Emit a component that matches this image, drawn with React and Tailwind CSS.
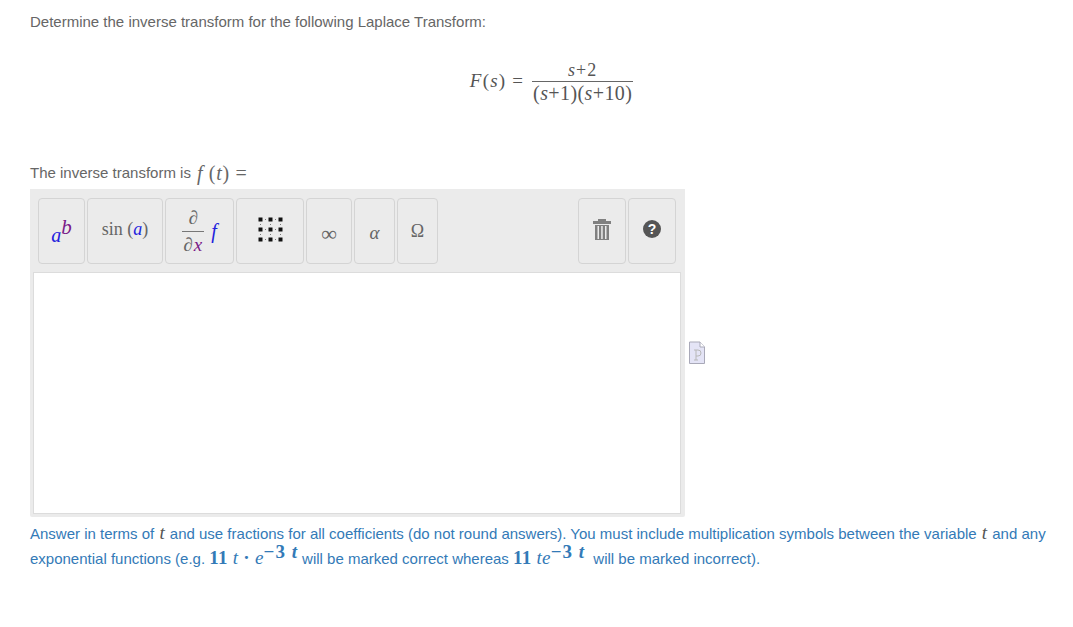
const mathFont = "font-['Liberation_Serif',serif]";

function ToolButton({ className, children }) {
  return (
    <button className={`flex h-[66px] shrink-0 items-center justify-center rounded-[4px] border border-[#d4d4d4] bg-[#ebebeb] ${className}`}>
      {children}
    </button>
  );
}

function MatrixIcon() {
  const spots = [0, 1, 2];
  return (
    <svg width="25" height="25" viewBox="0 0 25 25" className="mb-1">
      {spots.map((r) => spots.map((c) => (
        <rect key={`${r}-${c}`} x={c * 10 + 0.5} y={r * 10 + 0.5} width="4" height="4" fill="#111" />
      )))}
      {spots.map((r) => [0, 1].map((c) => (
        <rect key={`h${r}-${c}`} x={7 + c * 10} y={2 + r * 10} width="1" height="1" fill="#777" />
      )))}
      {[0, 1].map((r) => spots.map((c) => (
        <rect key={`v${r}-${c}`} x={2 + c * 10} y={7 + r * 10} width="1" height="1" fill="#777" />
      )))}
    </svg>
  );
}

function TrashIcon() {
  return (
    <svg width="18" height="21" viewBox="0 0 18 21" className="mb-1">
      <rect x="5" y="0" width="8" height="2" fill="#808080" />
      <rect x="0" y="2" width="18" height="3" fill="#808080" />
      <path d="M2 6h14V21H2z" fill="#808080" />
      <rect x="4.500" y="7" width="1.500" height="13" fill="#ebebeb" />
      <rect x="8.200" y="7" width="1.500" height="13" fill="#ebebeb" />
      <rect x="12" y="7" width="1.500" height="13" fill="#ebebeb" />
    </svg>
  );
}

function DocIcon() {
  return (
    <svg width="16" height="23" viewBox="0 0 16 23">
      <path d="M0.500 1h10.500l4.500 5v16.500H0.500z" fill="#e4e4f6" stroke="#a9a9b8" />
      <path d="M11 1v5h4.500" fill="#fff" stroke="#a9a9b8" />
      <path d="M5 9h4a2.500 2.500 0 0 1 0 6H7M7 9v10M5 19h4" fill="none" stroke="#b8b8b8" />
    </svg>
  );
}

function Toolbar() {
  return (
    <div className="flex h-[83px] items-start bg-[#ebebeb] pl-2 pr-[9px] pt-[9px]">
      <div className="flex gap-[2px]">
        <ToolButton className="w-[47px]">
          <span className={`${mathFont} pt-2 text-[20px] italic leading-none text-[#2222dd]`}>
            a<sup className="relative -top-[8px] align-baseline text-[21px] text-[#7a1a88]">b</sup>
          </span>
        </ToolButton>
        <ToolButton className="w-[76px]">
          <span className={`${mathFont} pb-1 text-[18px] text-[#666]`}>
            sin (<span className="italic text-[#2222dd]">a</span>)
          </span>
        </ToolButton>
        <ToolButton className="w-[69px]">
          <span className={`${mathFont} flex items-center gap-[7px] text-[#666]`}>
            <span className="flex flex-col items-center text-[19px] italic leading-[20px]">
              <span className="w-[22px] border-b border-[#777] pb-[3px] text-center">∂</span>
              <span className="pt-[3px] tracking-[1px]">∂<span className="text-[#7a1a88]">x</span></span>
            </span>
            <span className="text-[20px] italic text-[#2222dd]">f</span>
          </span>
        </ToolButton>
        <ToolButton className="w-[68px]">
          <MatrixIcon />
        </ToolButton>
        <ToolButton className="w-[46px]">
          <span className={`${mathFont} pt-1 text-[22px] text-[#666]`}>∞</span>
        </ToolButton>
        <ToolButton className="w-[41px]">
          <span className={`${mathFont} pt-1 text-[19px] italic text-[#666]`}>α</span>
        </ToolButton>
        <ToolButton className="w-[41px]">
          <span className={`${mathFont} text-[18px] text-[#666]`}>Ω</span>
        </ToolButton>
      </div>
      <div className="ml-auto flex gap-[2px]">
        <ToolButton className="w-[48px]">
          <TrashIcon />
        </ToolButton>
        <ToolButton className="w-[48px]">
          <span className="mb-1 flex h-[18px] w-[18px] items-center justify-center rounded-full bg-[#555] font-['Liberation_Sans',sans-serif] text-[14px] font-bold text-white">?</span>
        </ToolButton>
      </div>
    </div>
  );
}

function Exp() {
  return (
    <sup className={`${mathFont} relative -top-[6px] align-baseline text-[19px] font-bold tracking-[1px]`}>
      −3 <span className="italic">t</span>
    </sup>
  );
}

export default function App() {
  return (
    <div className="h-[627px] bg-white pl-[30px] pt-[14px] font-['Liberation_Sans',sans-serif] text-[15px] text-[#666]">
      <p className="h-[16px] leading-[16px]">Determine the inverse transform for the following Laplace Transform:</p>

      <div className={`${mathFont} mt-[30px] flex h-[44px] items-center justify-center text-[#555]`}>
        <span className="mr-[8px] pb-[2px] text-[19px] tracking-[1.2px]"><i>F</i>(<i>s</i>) =</span>
        <span className="flex flex-col items-center">
          <span className="w-[101px] border-b border-[#666] pb-[1px] text-center text-[18px] leading-[20px] tracking-[1px]"><i>s</i>+2</span>
          <span className="text-[20px] leading-[23px] tracking-[0.4px]">(<i>s</i>+1)(<i>s</i>+10)</span>
        </span>
      </div>

      <p className="mt-[59px] flex h-[20px] items-center">
        The inverse transform is
        <span className={`${mathFont} ml-[6px] text-[20px] tracking-[0.7px]`}><i>f</i> (<i>t</i>) =</span>
      </p>

      <div className="mt-[6px] flex items-center">
        <div className="h-[328px] w-[655px] rounded-[2px] bg-[#ebebeb]">
          <Toolbar />
          <div className="ml-[3px] h-[242px] w-[648px] border border-[#dcdcdc] bg-white" />
        </div>
        <div className="mb-[2px] ml-1">
          <DocIcon />
        </div>
      </div>

      <div className="mt-[4px] text-[#337ab7]">
        <p className="h-[25px] whitespace-nowrap leading-[24px]">
          Answer in terms of <i className={`${mathFont} px-[1px] text-[19px] text-[#555]`}>t</i> and use fractions for all coefficients (do not round answers). You must include multiplication symbols between the variable <i className={`${mathFont} px-[1px] text-[19px] text-[#555]`}>t</i> and any
        </p>
        <p className="h-[24px] whitespace-nowrap leading-[24px]">
          exponential functions (e.g. <span className={`${mathFont} text-[19px] font-bold tracking-[0.25px]`}>11 <i className="font-normal">t</i> · <i className="font-normal">e</i></span><Exp /> will be marked correct whereas <span className={`${mathFont} text-[19px] font-bold tracking-[0.25px]`}>11 <i className="font-normal">te</i></span><Exp />&nbsp; will be marked incorrect).
        </p>
      </div>
    </div>
  );
}
